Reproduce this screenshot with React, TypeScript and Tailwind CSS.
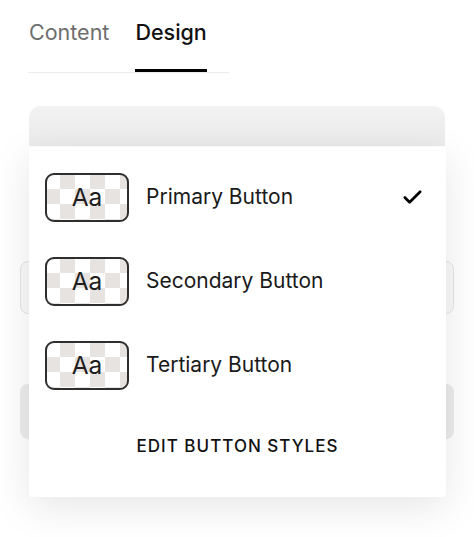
import { Check } from "lucide-react";

const buttonStyles = [
  { label: "Primary Button", selected: true },
  { label: "Secondary Button", selected: false },
  { label: "Tertiary Button", selected: false },
];

function Swatch() {
  return (
    <div className="flex h-[49px] w-[84px] shrink-0 items-center justify-center rounded-[9px] border-2 border-[#2e2e2e] bg-[conic-gradient(#e7e3e1_25%,#ffffff_0_50%,#e7e3e1_0_75%,#ffffff_0)] bg-[length:30px_30px] bg-[position:-2px_-1px]">
      <span className="text-[24.5px] leading-none text-[#1f1f1f]">Aa</span>
    </div>
  );
}

export default function App() {
  return (
    <div className="relative h-[537px] w-[474px] overflow-hidden bg-white font-['Inter',sans-serif]">
      {/* tabs */}
      <div className="ml-[28px] flex w-[201px] border-b border-[#ececec] pt-[18px]">
        <div className="pb-[25px] pl-[1px] text-[21.5px] leading-[29px] text-[#6e6e6e]">
          Content
        </div>
        <div className="ml-[26px] border-b-[3px] border-black pb-[22px] text-[21.5px] font-medium leading-[29px] text-[#111]">
          Design
        </div>
      </div>

      {/* page content under the menu */}
      <div className="mt-[33px] flex flex-col">
        <div className="mx-[29px] h-[40px] rounded-t-[12px] bg-[linear-gradient(#f2f2f2,#ebebeb)]" />
        <div className="mx-[20px] mt-[115px] h-[53px] rounded-[8px] border border-[#e6e6e6] bg-[#f9f9f9]" />
        <div className="mx-[20px] mt-[70px] h-[55px] rounded-[8px] bg-[#ececec]" />
      </div>

      {/* dropdown */}
      <div className="absolute left-[29px] top-[147px] w-[417px] rounded-b-[3px] bg-white pt-[8px] pb-[10px] shadow-[0_10px_40px_rgba(0,0,0,0.10)]">
        {buttonStyles.map((item) => (
          <div key={item.label} className="flex h-[84px] items-center pl-[16px] pr-[22px]">
            <Swatch />
            <span className="ml-[17px] grow text-[21px] text-[#1a1a1a]">{item.label}</span>
            {item.selected && <Check className="h-[23px] w-[23px] text-black" strokeWidth={2.8} />}
          </div>
        ))}
        <div className="flex h-[80px] items-center justify-center text-[17px] font-medium tracking-[0.06em] text-[#111]">
          EDIT BUTTON STYLES
        </div>
      </div>
    </div>
  );
}
